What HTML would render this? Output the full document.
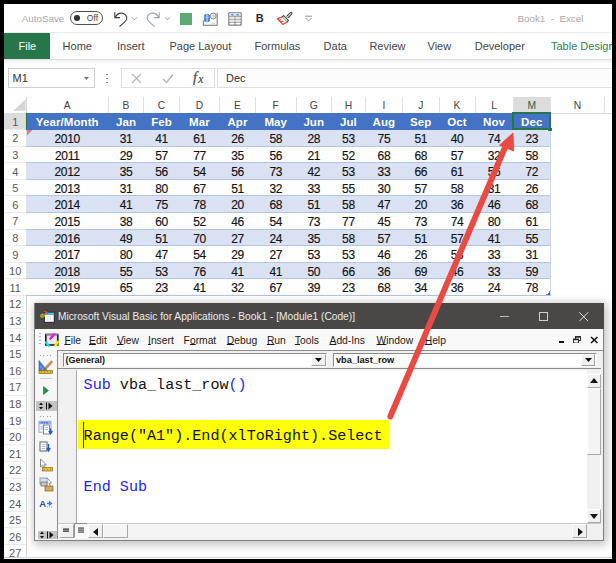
<!DOCTYPE html>
<html><head><meta charset="utf-8"><style>
html,body{margin:0;padding:0;}
body{width:616px;height:563px;background:#000;position:relative;overflow:hidden;font-family:'Liberation Sans', sans-serif;}
#c{position:absolute;left:4px;top:4px;width:608px;height:555px;background:#fff;overflow:hidden;}
#c>div,#c>svg{position:absolute;}
#o{position:absolute;left:-4px;top:-4px;width:616px;height:563px;}
#o>div,#o>svg{position:absolute;}
</style></head><body><div id="c"><div id="o">
<div style="left:21.8px;top:14.00px;font:normal 9.8px/9.8px 'Liberation Sans', sans-serif;color:#a8a8a8;white-space:pre;">AutoSave</div>
<div style="left:70px;top:11.3px;width:30.8px;height:12px;border:1px solid #505050;border-radius:7px"></div>
<div style="left:74px;top:15.2px;width:5.6px;height:5.6px;border-radius:50%;background:#333"></div>
<div style="left:86.8px;top:14.02px;font:normal 8.6px/8.6px 'Liberation Sans', sans-serif;color:#444;white-space:pre;">Off</div>
<svg style="left:100px;top:0px" width="80" height="32" viewBox="100 0 80 32">
<path d="M114.8 12.3 V17.6 H120" fill="none" stroke="#3a3a3a" stroke-width="1.1"/>
<path d="M115.3 17.2 C117 14 120 12.8 122.5 13.2 C125.5 13.8 127.3 16.5 126.6 19.3 C126.2 20.6 125.5 21.3 119.5 26.5" fill="none" stroke="#3a3a3a" stroke-width="1.1"/>
<path d="M132 17.3 L134.5 19.8 L137 17.3" fill="none" stroke="#888" stroke-width="0.8"/>
<path d="M159.2 12.3 V17.6 H154" fill="none" stroke="#9aa2aa" stroke-width="1.1"/>
<path d="M158.7 17.2 C157 14 154 12.8 151.5 13.2 C148.5 13.8 146.7 16.5 147.4 19.3 C147.8 20.6 148.5 21.3 154.5 26.5" fill="none" stroke="#9aa2aa" stroke-width="1.1"/>
<path d="M165 17.3 L167.5 19.8 L170 17.3" fill="none" stroke="#888" stroke-width="0.8"/>
</svg>
<div style="left:179.5px;top:13.4px;width:12.5px;height:11.6px;background:#5daa74"></div>
<svg style="left:202px;top:11px" width="17" height="16" viewBox="0 0 17 16">
<path d="M1.3 9.5 V14.3 H15.2 V1.8" fill="none" stroke="#707070" stroke-width="1"/>
<path d="M9.5 12.8 H13" stroke="#aaa" stroke-width="0.6"/>
<path d="M2 4.2 Q5 1.5 8 4.2 V10 Q5 12.7 2 10 Z" fill="#4a88dc"/>
<path d="M5 3 V11" stroke="#e8f0fc" stroke-width="0.9"/>
<path d="M2.5 6 Q5 7.5 7.5 6" fill="none" stroke="#c8dcf8" stroke-width="0.6"/>
<circle cx="11.2" cy="5" r="3" fill="#fff" stroke="#7a7a7a" stroke-width="0.9"/>
<path d="M11.2 2 V8 M8.4 5 H14" stroke="#a0a0a0" stroke-width="0.5"/>
</svg>
<svg style="left:227.5px;top:12px" width="14" height="14" viewBox="0 0 14 14">
<rect x="0.9" y="0.9" width="12.2" height="12.2" fill="#fff" stroke="#505050" stroke-width="0.9"/>
<rect x="1.4" y="1.4" width="11.2" height="2.8" fill="#dde8f8"/>
<path d="M0.9 4.3 H13.1 M0.9 7.2 H13.1 M0.9 10.1 H13.1" stroke="#606060" stroke-width="0.8"/>
<path d="M7 4.3 V13.1" stroke="#606060" stroke-width="0.8"/>
<path d="M1.4 4.8 H6.6 V6.8 H1.4 Z M7.4 4.8 H12.6 V6.8 H7.4Z M1.4 7.7 H6.6 V9.7 H1.4 Z M7.4 7.7 H12.6 V9.7 H7.4Z" fill="#e6e6e6"/>
<path d="M2.8 2.2 L4.3 3.8 L5.8 2.2 Z M8.2 2.2 L9.7 3.8 L11.2 2.2 Z" fill="#2b6fd6"/>
</svg>
<div style="left:255.8px;top:13.29px;font:bold 11px/11px 'Liberation Sans', sans-serif;color:#2a2a2a;white-space:pre;">B</div>
<svg style="left:270px;top:5px" width="26" height="25" viewBox="270 5 26 25">
<path d="M286.5 16.5 L290.2 12.8 Q291.3 12 291.8 12.8 Q292.3 13.6 291.5 14.4 L287.8 18" fill="#fff" stroke="#4a4a4a" stroke-width="1.1"/>
<path d="M283.6 15.6 L288.5 20.4 L287 21.9 L282.1 17.1 Z" fill="#fff" stroke="#4a4a4a" stroke-width="1.1"/>
<path d="M282.1 17.1 L277.3 18.6 L282.8 24.4 L287 21.9" fill="#fff" stroke="#e8402e" stroke-width="1.2" stroke-linejoin="round"/>
<path d="M278.5 20.3 L281.2 19.7 M280 22 L283.5 21.2" stroke="#e8402e" stroke-width="1.1"/>
</svg>
<svg style="left:304px;top:15px" width="9" height="7" viewBox="0 0 9 7">
<path d="M1 1.2 H8" stroke="#888" stroke-width="0.9"/>
<path d="M1.5 3 L4.5 6 L7.5 3" fill="none" stroke="#888" stroke-width="0.9"/>
</svg>
<div style="left:517.5px;top:13.70px;font:normal 9.8px/9.8px 'Liberation Sans', sans-serif;color:#a8a8a8;white-space:pre;">Book1  -  Excel</div>
<div style="left:4px;top:32px;width:608px;height:1px;background:#ebebeb"></div>
<div style="left:4px;top:33px;width:46px;height:26px;background:#27764b"></div>
<div style="left:18.5px;top:40.69px;font:normal 11px/11px 'Liberation Sans', sans-serif;color:#fff;white-space:pre;">File</div>
<div style="left:62.6px;top:40.69px;font:normal 11px/11px 'Liberation Sans', sans-serif;color:#444;white-space:pre;">Home</div>
<div style="left:117px;top:40.69px;font:normal 11px/11px 'Liberation Sans', sans-serif;color:#444;white-space:pre;">Insert</div>
<div style="left:169.5px;top:40.69px;font:normal 11px/11px 'Liberation Sans', sans-serif;color:#444;white-space:pre;">Page Layout</div>
<div style="left:254.5px;top:40.69px;font:normal 11px/11px 'Liberation Sans', sans-serif;color:#444;white-space:pre;">Formulas</div>
<div style="left:323.6px;top:40.69px;font:normal 11px/11px 'Liberation Sans', sans-serif;color:#444;white-space:pre;">Data</div>
<div style="left:369.4px;top:40.69px;font:normal 11px/11px 'Liberation Sans', sans-serif;color:#444;white-space:pre;">Review</div>
<div style="left:427.5px;top:40.69px;font:normal 11px/11px 'Liberation Sans', sans-serif;color:#444;white-space:pre;">View</div>
<div style="left:474.7px;top:40.69px;font:normal 11px/11px 'Liberation Sans', sans-serif;color:#444;white-space:pre;">Developer</div>
<div style="left:551px;top:40.69px;font:normal 11px/11px 'Liberation Sans', sans-serif;color:#2f7f50;white-space:pre;">Table Design</div>
<div style="left:4px;top:59px;width:608px;height:1px;background:#e2e2e2"></div>
<div style="left:4px;top:60px;width:608px;height:4px;background:linear-gradient(#eeeeee,#ffffff)"></div>
<div style="left:8px;top:68px;width:85px;height:17.6px;border:1px solid #d0d0d0;background:#fff"></div>
<div style="left:12.5px;top:72.99px;font:normal 11px/11px 'Liberation Sans', sans-serif;color:#333;white-space:pre;">M1</div>
<svg style="left:84px;top:76.5px" width="5" height="3" viewBox="0 0 5 3"><path d="M0 0 H5 L2.5 3Z" fill="#707070"/></svg>
<div style="left:106.3px;top:74px;width:1.4000000000000057px;height:1.4000000000000057px;background:#888"></div>
<div style="left:106.3px;top:78px;width:1.4000000000000057px;height:1.4000000000000057px;background:#888"></div>
<div style="left:106.3px;top:82px;width:1.4000000000000057px;height:1.4000000000000057px;background:#888"></div>
<div style="left:120.7px;top:68px;width:92px;height:17.6px;border:1px solid #e0e0e0;background:#fff"></div>
<svg style="left:131px;top:73px" width="11" height="11" viewBox="0 0 11 11"><path d="M1 1 L10 10 M10 1 L1 10" stroke="#b4b4b4" stroke-width="1.1"/></svg>
<svg style="left:161.5px;top:73px" width="12" height="11" viewBox="0 0 12 11"><path d="M1 6 L4.5 9.5 L11 1.5" fill="none" stroke="#b4b4b4" stroke-width="1.3"/></svg>
<div style="left:193px;top:70.03px;font:normal 14.5px/14.5px 'Liberation Serif', serif;color:#4a4a4a;white-space:pre;font-style:italic;-webkit-text-stroke:0.2px #4a4a4a">f<span style="font-size:11.5px;margin-left:1.2px;position:relative;top:0.6px">x</span></div>
<div style="left:216.6px;top:68px;width:400px;height:17.6px;border:1px solid #e0e0e0;background:#fcfcfc"></div>
<div style="left:226px;top:72.99px;font:normal 11px/11px 'Liberation Sans', sans-serif;color:#333;white-space:pre;">Dec</div>
<svg style="left:12.5px;top:99px" width="13" height="12" viewBox="0 0 13 12"><path d="M12.5 0.3 V11.7 H0.5 Z" fill="#d5d5d5"/></svg>
<div style="left:513px;top:97px;width:37.5px;height:15.5px;background:#dcdcdc"></div>
<div style="left:4px;top:112.5px;width:608px;height:1.0px;background:#dadada"></div>
<div style="left:108.0px;top:97px;width:1.0px;height:16px;background:#e0e0e0"></div>
<div style="left:143.0px;top:97px;width:1.0px;height:16px;background:#e0e0e0"></div>
<div style="left:179.0px;top:97px;width:1.0px;height:16px;background:#e0e0e0"></div>
<div style="left:219.0px;top:97px;width:1.0px;height:16px;background:#e0e0e0"></div>
<div style="left:255.0px;top:97px;width:1.0px;height:16px;background:#e0e0e0"></div>
<div style="left:295.5px;top:97px;width:1.0px;height:16px;background:#e0e0e0"></div>
<div style="left:331.0px;top:97px;width:1.0px;height:16px;background:#e0e0e0"></div>
<div style="left:364.8px;top:97px;width:1.0px;height:16px;background:#e0e0e0"></div>
<div style="left:402.0px;top:97px;width:1.0px;height:16px;background:#e0e0e0"></div>
<div style="left:438.5px;top:97px;width:1.0px;height:16px;background:#e0e0e0"></div>
<div style="left:474.5px;top:97px;width:1.0px;height:16px;background:#e0e0e0"></div>
<div style="left:512.5px;top:97px;width:1.0px;height:16px;background:#e0e0e0"></div>
<div style="left:550.0px;top:97px;width:1.0px;height:16px;background:#e0e0e0"></div>
<div style="left:604.0px;top:97px;width:1.0px;height:16px;background:#e0e0e0"></div>
<div style="left:25.5px;top:97px;width:1.0px;height:462px;background:#d4d4d4"></div>
<div style="left:-32.75px;top:101.08px;width:200px;text-align:center;font:normal 10.3px/10.3px 'Liberation Sans', sans-serif;color:#444;white-space:pre;">A</div>
<div style="left:26.0px;top:101.08px;width:200px;text-align:center;font:normal 10.3px/10.3px 'Liberation Sans', sans-serif;color:#444;white-space:pre;">B</div>
<div style="left:61.5px;top:101.08px;width:200px;text-align:center;font:normal 10.3px/10.3px 'Liberation Sans', sans-serif;color:#444;white-space:pre;">C</div>
<div style="left:99.5px;top:101.08px;width:200px;text-align:center;font:normal 10.3px/10.3px 'Liberation Sans', sans-serif;color:#444;white-space:pre;">D</div>
<div style="left:137.5px;top:101.08px;width:200px;text-align:center;font:normal 10.3px/10.3px 'Liberation Sans', sans-serif;color:#444;white-space:pre;">E</div>
<div style="left:175.75px;top:101.08px;width:200px;text-align:center;font:normal 10.3px/10.3px 'Liberation Sans', sans-serif;color:#444;white-space:pre;">F</div>
<div style="left:213.75px;top:101.08px;width:200px;text-align:center;font:normal 10.3px/10.3px 'Liberation Sans', sans-serif;color:#444;white-space:pre;">G</div>
<div style="left:248.39999999999998px;top:101.08px;width:200px;text-align:center;font:normal 10.3px/10.3px 'Liberation Sans', sans-serif;color:#444;white-space:pre;">H</div>
<div style="left:283.9px;top:101.08px;width:200px;text-align:center;font:normal 10.3px/10.3px 'Liberation Sans', sans-serif;color:#444;white-space:pre;">I</div>
<div style="left:320.75px;top:101.08px;width:200px;text-align:center;font:normal 10.3px/10.3px 'Liberation Sans', sans-serif;color:#444;white-space:pre;">J</div>
<div style="left:357.0px;top:101.08px;width:200px;text-align:center;font:normal 10.3px/10.3px 'Liberation Sans', sans-serif;color:#444;white-space:pre;">K</div>
<div style="left:394.0px;top:101.08px;width:200px;text-align:center;font:normal 10.3px/10.3px 'Liberation Sans', sans-serif;color:#444;white-space:pre;">L</div>
<div style="left:431.75px;top:101.08px;width:200px;text-align:center;font:normal 10.3px/10.3px 'Liberation Sans', sans-serif;color:#2a6048;white-space:pre;">M</div>
<div style="left:477.5px;top:101.08px;width:200px;text-align:center;font:normal 10.3px/10.3px 'Liberation Sans', sans-serif;color:#444;white-space:pre;">N</div>
<div style="left:4px;top:113px;width:22px;height:16.5px;background:#dcdcdc"></div>
<div style="left:4px;top:129px;width:22px;height:1px;background:#ececec"></div>
<div style="left:-84.8px;top:116.79px;width:200px;text-align:center;font:normal 11px/11px 'Liberation Sans', sans-serif;color:#585858;white-space:pre;">1</div>
<div style="left:4px;top:146px;width:22px;height:1px;background:#ececec"></div>
<div style="left:-84.8px;top:133.39px;width:200px;text-align:center;font:normal 11px/11px 'Liberation Sans', sans-serif;color:#585858;white-space:pre;">2</div>
<div style="left:4px;top:162px;width:22px;height:1px;background:#ececec"></div>
<div style="left:-84.8px;top:149.99px;width:200px;text-align:center;font:normal 11px/11px 'Liberation Sans', sans-serif;color:#585858;white-space:pre;">3</div>
<div style="left:4px;top:179px;width:22px;height:1px;background:#ececec"></div>
<div style="left:-84.8px;top:166.59px;width:200px;text-align:center;font:normal 11px/11px 'Liberation Sans', sans-serif;color:#585858;white-space:pre;">4</div>
<div style="left:4px;top:195px;width:22px;height:1px;background:#ececec"></div>
<div style="left:-84.8px;top:183.19px;width:200px;text-align:center;font:normal 11px/11px 'Liberation Sans', sans-serif;color:#585858;white-space:pre;">5</div>
<div style="left:4px;top:212px;width:22px;height:1px;background:#ececec"></div>
<div style="left:-84.8px;top:199.79px;width:200px;text-align:center;font:normal 11px/11px 'Liberation Sans', sans-serif;color:#585858;white-space:pre;">6</div>
<div style="left:4px;top:229px;width:22px;height:1px;background:#ececec"></div>
<div style="left:-84.8px;top:216.39px;width:200px;text-align:center;font:normal 11px/11px 'Liberation Sans', sans-serif;color:#585858;white-space:pre;">7</div>
<div style="left:4px;top:245px;width:22px;height:1px;background:#ececec"></div>
<div style="left:-84.8px;top:232.99px;width:200px;text-align:center;font:normal 11px/11px 'Liberation Sans', sans-serif;color:#585858;white-space:pre;">8</div>
<div style="left:4px;top:262px;width:22px;height:1px;background:#ececec"></div>
<div style="left:-84.8px;top:249.59px;width:200px;text-align:center;font:normal 11px/11px 'Liberation Sans', sans-serif;color:#585858;white-space:pre;">9</div>
<div style="left:4px;top:278px;width:22px;height:1px;background:#ececec"></div>
<div style="left:-84.8px;top:266.19px;width:200px;text-align:center;font:normal 11px/11px 'Liberation Sans', sans-serif;color:#585858;white-space:pre;">10</div>
<div style="left:4px;top:295px;width:22px;height:1px;background:#ececec"></div>
<div style="left:-84.8px;top:282.79px;width:200px;text-align:center;font:normal 11px/11px 'Liberation Sans', sans-serif;color:#585858;white-space:pre;">11</div>
<div style="left:4px;top:312px;width:22px;height:1px;background:#ececec"></div>
<div style="left:-84.8px;top:299.39px;width:200px;text-align:center;font:normal 11px/11px 'Liberation Sans', sans-serif;color:#585858;white-space:pre;">12</div>
<div style="left:4px;top:328px;width:22px;height:1px;background:#ececec"></div>
<div style="left:-84.8px;top:315.99px;width:200px;text-align:center;font:normal 11px/11px 'Liberation Sans', sans-serif;color:#585858;white-space:pre;">13</div>
<div style="left:4px;top:345px;width:22px;height:1px;background:#ececec"></div>
<div style="left:-84.8px;top:332.59px;width:200px;text-align:center;font:normal 11px/11px 'Liberation Sans', sans-serif;color:#585858;white-space:pre;">14</div>
<div style="left:4px;top:361px;width:22px;height:1px;background:#ececec"></div>
<div style="left:-84.8px;top:349.19px;width:200px;text-align:center;font:normal 11px/11px 'Liberation Sans', sans-serif;color:#585858;white-space:pre;">15</div>
<div style="left:4px;top:378px;width:22px;height:1px;background:#ececec"></div>
<div style="left:-84.8px;top:365.79px;width:200px;text-align:center;font:normal 11px/11px 'Liberation Sans', sans-serif;color:#585858;white-space:pre;">16</div>
<div style="left:4px;top:395px;width:22px;height:1px;background:#ececec"></div>
<div style="left:-84.8px;top:382.39px;width:200px;text-align:center;font:normal 11px/11px 'Liberation Sans', sans-serif;color:#585858;white-space:pre;">17</div>
<div style="left:4px;top:411px;width:22px;height:1px;background:#ececec"></div>
<div style="left:-84.8px;top:398.99px;width:200px;text-align:center;font:normal 11px/11px 'Liberation Sans', sans-serif;color:#585858;white-space:pre;">18</div>
<div style="left:4px;top:428px;width:22px;height:1px;background:#ececec"></div>
<div style="left:-84.8px;top:415.59px;width:200px;text-align:center;font:normal 11px/11px 'Liberation Sans', sans-serif;color:#585858;white-space:pre;">19</div>
<div style="left:4px;top:444px;width:22px;height:1px;background:#ececec"></div>
<div style="left:-84.8px;top:432.19px;width:200px;text-align:center;font:normal 11px/11px 'Liberation Sans', sans-serif;color:#585858;white-space:pre;">20</div>
<div style="left:4px;top:461px;width:22px;height:1px;background:#ececec"></div>
<div style="left:-84.8px;top:448.79px;width:200px;text-align:center;font:normal 11px/11px 'Liberation Sans', sans-serif;color:#585858;white-space:pre;">21</div>
<div style="left:4px;top:478px;width:22px;height:1px;background:#ececec"></div>
<div style="left:-84.8px;top:465.39px;width:200px;text-align:center;font:normal 11px/11px 'Liberation Sans', sans-serif;color:#585858;white-space:pre;">22</div>
<div style="left:4px;top:494px;width:22px;height:1px;background:#ececec"></div>
<div style="left:-84.8px;top:481.99px;width:200px;text-align:center;font:normal 11px/11px 'Liberation Sans', sans-serif;color:#585858;white-space:pre;">23</div>
<div style="left:4px;top:511px;width:22px;height:1px;background:#ececec"></div>
<div style="left:-84.8px;top:498.59px;width:200px;text-align:center;font:normal 11px/11px 'Liberation Sans', sans-serif;color:#585858;white-space:pre;">24</div>
<div style="left:4px;top:527px;width:22px;height:1px;background:#ececec"></div>
<div style="left:-84.8px;top:515.19px;width:200px;text-align:center;font:normal 11px/11px 'Liberation Sans', sans-serif;color:#585858;white-space:pre;">25</div>
<div style="left:4px;top:544px;width:22px;height:1px;background:#ececec"></div>
<div style="left:-84.8px;top:531.79px;width:200px;text-align:center;font:normal 11px/11px 'Liberation Sans', sans-serif;color:#585858;white-space:pre;">26</div>
<div style="left:4px;top:561px;width:22px;height:1px;background:#ececec"></div>
<div style="left:-84.8px;top:548.39px;width:200px;text-align:center;font:normal 11px/11px 'Liberation Sans', sans-serif;color:#585858;white-space:pre;">27</div>
<div style="left:26px;top:113px;width:524px;height:17px;background:#4472c4"></div>
<div style="left:26px;top:130px;width:524px;height:17px;background:#d9e1f2"></div>
<div style="left:26px;top:146px;width:524px;height:1px;background:#b4c6e7"></div>
<div style="left:26px;top:147px;width:524px;height:16px;background:#ffffff"></div>
<div style="left:26px;top:162px;width:524px;height:1px;background:#b4c6e7"></div>
<div style="left:26px;top:163px;width:524px;height:17px;background:#d9e1f2"></div>
<div style="left:26px;top:179px;width:524px;height:1px;background:#b4c6e7"></div>
<div style="left:26px;top:180px;width:524px;height:16px;background:#ffffff"></div>
<div style="left:26px;top:195px;width:524px;height:1px;background:#b4c6e7"></div>
<div style="left:26px;top:196px;width:524px;height:17px;background:#d9e1f2"></div>
<div style="left:26px;top:212px;width:524px;height:1px;background:#b4c6e7"></div>
<div style="left:26px;top:213px;width:524px;height:17px;background:#ffffff"></div>
<div style="left:26px;top:229px;width:524px;height:1px;background:#b4c6e7"></div>
<div style="left:26px;top:230px;width:524px;height:16px;background:#d9e1f2"></div>
<div style="left:26px;top:245px;width:524px;height:1px;background:#b4c6e7"></div>
<div style="left:26px;top:246px;width:524px;height:17px;background:#ffffff"></div>
<div style="left:26px;top:262px;width:524px;height:1px;background:#b4c6e7"></div>
<div style="left:26px;top:263px;width:524px;height:16px;background:#d9e1f2"></div>
<div style="left:26px;top:278px;width:524px;height:1px;background:#b4c6e7"></div>
<div style="left:26px;top:279px;width:524px;height:17px;background:#ffffff"></div>
<div style="left:26px;top:295px;width:524px;height:1px;background:#b4c6e7"></div>
<div style="left:550px;top:130px;width:1px;height:166px;background:#c9d6ee"></div>
<div style="left:-32.75px;top:117.17px;width:200px;text-align:center;font:bold 11.5px/11.5px 'Liberation Sans', sans-serif;color:#fff;white-space:pre;letter-spacing:0.1px">Year/Month</div>
<div style="left:26.0px;top:117.17px;width:200px;text-align:center;font:bold 11.5px/11.5px 'Liberation Sans', sans-serif;color:#fff;white-space:pre;letter-spacing:0.1px">Jan</div>
<div style="left:61.5px;top:117.17px;width:200px;text-align:center;font:bold 11.5px/11.5px 'Liberation Sans', sans-serif;color:#fff;white-space:pre;letter-spacing:0.1px">Feb</div>
<div style="left:99.5px;top:117.17px;width:200px;text-align:center;font:bold 11.5px/11.5px 'Liberation Sans', sans-serif;color:#fff;white-space:pre;letter-spacing:0.1px">Mar</div>
<div style="left:137.5px;top:117.17px;width:200px;text-align:center;font:bold 11.5px/11.5px 'Liberation Sans', sans-serif;color:#fff;white-space:pre;letter-spacing:0.1px">Apr</div>
<div style="left:175.75px;top:117.17px;width:200px;text-align:center;font:bold 11.5px/11.5px 'Liberation Sans', sans-serif;color:#fff;white-space:pre;letter-spacing:0.1px">May</div>
<div style="left:213.75px;top:117.17px;width:200px;text-align:center;font:bold 11.5px/11.5px 'Liberation Sans', sans-serif;color:#fff;white-space:pre;letter-spacing:0.1px">Jun</div>
<div style="left:248.39999999999998px;top:117.17px;width:200px;text-align:center;font:bold 11.5px/11.5px 'Liberation Sans', sans-serif;color:#fff;white-space:pre;letter-spacing:0.1px">Jul</div>
<div style="left:283.9px;top:117.17px;width:200px;text-align:center;font:bold 11.5px/11.5px 'Liberation Sans', sans-serif;color:#fff;white-space:pre;letter-spacing:0.1px">Aug</div>
<div style="left:320.75px;top:117.17px;width:200px;text-align:center;font:bold 11.5px/11.5px 'Liberation Sans', sans-serif;color:#fff;white-space:pre;letter-spacing:0.1px">Sep</div>
<div style="left:357.0px;top:117.17px;width:200px;text-align:center;font:bold 11.5px/11.5px 'Liberation Sans', sans-serif;color:#fff;white-space:pre;letter-spacing:0.1px">Oct</div>
<div style="left:394.0px;top:117.17px;width:200px;text-align:center;font:bold 11.5px/11.5px 'Liberation Sans', sans-serif;color:#fff;white-space:pre;letter-spacing:0.1px">Nov</div>
<div style="left:431.75px;top:117.17px;width:200px;text-align:center;font:bold 11.5px/11.5px 'Liberation Sans', sans-serif;color:#fff;white-space:pre;letter-spacing:0.1px">Dec</div>
<div style="left:-32.75px;top:132.94px;width:200px;text-align:center;font:normal 12px/12px 'Liberation Sans', sans-serif;color:#111;white-space:pre;letter-spacing:-0.3px;-webkit-text-stroke:0.15px #111">2010</div>
<div style="left:26.0px;top:132.94px;width:200px;text-align:center;font:normal 12px/12px 'Liberation Sans', sans-serif;color:#111;white-space:pre;letter-spacing:-0.3px;-webkit-text-stroke:0.15px #111">31</div>
<div style="left:61.5px;top:132.94px;width:200px;text-align:center;font:normal 12px/12px 'Liberation Sans', sans-serif;color:#111;white-space:pre;letter-spacing:-0.3px;-webkit-text-stroke:0.15px #111">41</div>
<div style="left:99.5px;top:132.94px;width:200px;text-align:center;font:normal 12px/12px 'Liberation Sans', sans-serif;color:#111;white-space:pre;letter-spacing:-0.3px;-webkit-text-stroke:0.15px #111">61</div>
<div style="left:137.5px;top:132.94px;width:200px;text-align:center;font:normal 12px/12px 'Liberation Sans', sans-serif;color:#111;white-space:pre;letter-spacing:-0.3px;-webkit-text-stroke:0.15px #111">26</div>
<div style="left:175.75px;top:132.94px;width:200px;text-align:center;font:normal 12px/12px 'Liberation Sans', sans-serif;color:#111;white-space:pre;letter-spacing:-0.3px;-webkit-text-stroke:0.15px #111">58</div>
<div style="left:213.75px;top:132.94px;width:200px;text-align:center;font:normal 12px/12px 'Liberation Sans', sans-serif;color:#111;white-space:pre;letter-spacing:-0.3px;-webkit-text-stroke:0.15px #111">28</div>
<div style="left:248.39999999999998px;top:132.94px;width:200px;text-align:center;font:normal 12px/12px 'Liberation Sans', sans-serif;color:#111;white-space:pre;letter-spacing:-0.3px;-webkit-text-stroke:0.15px #111">53</div>
<div style="left:283.9px;top:132.94px;width:200px;text-align:center;font:normal 12px/12px 'Liberation Sans', sans-serif;color:#111;white-space:pre;letter-spacing:-0.3px;-webkit-text-stroke:0.15px #111">75</div>
<div style="left:320.75px;top:132.94px;width:200px;text-align:center;font:normal 12px/12px 'Liberation Sans', sans-serif;color:#111;white-space:pre;letter-spacing:-0.3px;-webkit-text-stroke:0.15px #111">51</div>
<div style="left:357.0px;top:132.94px;width:200px;text-align:center;font:normal 12px/12px 'Liberation Sans', sans-serif;color:#111;white-space:pre;letter-spacing:-0.3px;-webkit-text-stroke:0.15px #111">40</div>
<div style="left:394.0px;top:132.94px;width:200px;text-align:center;font:normal 12px/12px 'Liberation Sans', sans-serif;color:#111;white-space:pre;letter-spacing:-0.3px;-webkit-text-stroke:0.15px #111">74</div>
<div style="left:431.75px;top:132.94px;width:200px;text-align:center;font:normal 12px/12px 'Liberation Sans', sans-serif;color:#111;white-space:pre;letter-spacing:-0.3px;-webkit-text-stroke:0.15px #111">23</div>
<div style="left:-32.75px;top:149.54px;width:200px;text-align:center;font:normal 12px/12px 'Liberation Sans', sans-serif;color:#111;white-space:pre;letter-spacing:-0.3px;-webkit-text-stroke:0.15px #111">2011</div>
<div style="left:26.0px;top:149.54px;width:200px;text-align:center;font:normal 12px/12px 'Liberation Sans', sans-serif;color:#111;white-space:pre;letter-spacing:-0.3px;-webkit-text-stroke:0.15px #111">29</div>
<div style="left:61.5px;top:149.54px;width:200px;text-align:center;font:normal 12px/12px 'Liberation Sans', sans-serif;color:#111;white-space:pre;letter-spacing:-0.3px;-webkit-text-stroke:0.15px #111">57</div>
<div style="left:99.5px;top:149.54px;width:200px;text-align:center;font:normal 12px/12px 'Liberation Sans', sans-serif;color:#111;white-space:pre;letter-spacing:-0.3px;-webkit-text-stroke:0.15px #111">77</div>
<div style="left:137.5px;top:149.54px;width:200px;text-align:center;font:normal 12px/12px 'Liberation Sans', sans-serif;color:#111;white-space:pre;letter-spacing:-0.3px;-webkit-text-stroke:0.15px #111">35</div>
<div style="left:175.75px;top:149.54px;width:200px;text-align:center;font:normal 12px/12px 'Liberation Sans', sans-serif;color:#111;white-space:pre;letter-spacing:-0.3px;-webkit-text-stroke:0.15px #111">56</div>
<div style="left:213.75px;top:149.54px;width:200px;text-align:center;font:normal 12px/12px 'Liberation Sans', sans-serif;color:#111;white-space:pre;letter-spacing:-0.3px;-webkit-text-stroke:0.15px #111">21</div>
<div style="left:248.39999999999998px;top:149.54px;width:200px;text-align:center;font:normal 12px/12px 'Liberation Sans', sans-serif;color:#111;white-space:pre;letter-spacing:-0.3px;-webkit-text-stroke:0.15px #111">52</div>
<div style="left:283.9px;top:149.54px;width:200px;text-align:center;font:normal 12px/12px 'Liberation Sans', sans-serif;color:#111;white-space:pre;letter-spacing:-0.3px;-webkit-text-stroke:0.15px #111">68</div>
<div style="left:320.75px;top:149.54px;width:200px;text-align:center;font:normal 12px/12px 'Liberation Sans', sans-serif;color:#111;white-space:pre;letter-spacing:-0.3px;-webkit-text-stroke:0.15px #111">68</div>
<div style="left:357.0px;top:149.54px;width:200px;text-align:center;font:normal 12px/12px 'Liberation Sans', sans-serif;color:#111;white-space:pre;letter-spacing:-0.3px;-webkit-text-stroke:0.15px #111">57</div>
<div style="left:394.0px;top:149.54px;width:200px;text-align:center;font:normal 12px/12px 'Liberation Sans', sans-serif;color:#111;white-space:pre;letter-spacing:-0.3px;-webkit-text-stroke:0.15px #111">32</div>
<div style="left:431.75px;top:149.54px;width:200px;text-align:center;font:normal 12px/12px 'Liberation Sans', sans-serif;color:#111;white-space:pre;letter-spacing:-0.3px;-webkit-text-stroke:0.15px #111">58</div>
<div style="left:-32.75px;top:166.14px;width:200px;text-align:center;font:normal 12px/12px 'Liberation Sans', sans-serif;color:#111;white-space:pre;letter-spacing:-0.3px;-webkit-text-stroke:0.15px #111">2012</div>
<div style="left:26.0px;top:166.14px;width:200px;text-align:center;font:normal 12px/12px 'Liberation Sans', sans-serif;color:#111;white-space:pre;letter-spacing:-0.3px;-webkit-text-stroke:0.15px #111">35</div>
<div style="left:61.5px;top:166.14px;width:200px;text-align:center;font:normal 12px/12px 'Liberation Sans', sans-serif;color:#111;white-space:pre;letter-spacing:-0.3px;-webkit-text-stroke:0.15px #111">56</div>
<div style="left:99.5px;top:166.14px;width:200px;text-align:center;font:normal 12px/12px 'Liberation Sans', sans-serif;color:#111;white-space:pre;letter-spacing:-0.3px;-webkit-text-stroke:0.15px #111">54</div>
<div style="left:137.5px;top:166.14px;width:200px;text-align:center;font:normal 12px/12px 'Liberation Sans', sans-serif;color:#111;white-space:pre;letter-spacing:-0.3px;-webkit-text-stroke:0.15px #111">56</div>
<div style="left:175.75px;top:166.14px;width:200px;text-align:center;font:normal 12px/12px 'Liberation Sans', sans-serif;color:#111;white-space:pre;letter-spacing:-0.3px;-webkit-text-stroke:0.15px #111">73</div>
<div style="left:213.75px;top:166.14px;width:200px;text-align:center;font:normal 12px/12px 'Liberation Sans', sans-serif;color:#111;white-space:pre;letter-spacing:-0.3px;-webkit-text-stroke:0.15px #111">42</div>
<div style="left:248.39999999999998px;top:166.14px;width:200px;text-align:center;font:normal 12px/12px 'Liberation Sans', sans-serif;color:#111;white-space:pre;letter-spacing:-0.3px;-webkit-text-stroke:0.15px #111">53</div>
<div style="left:283.9px;top:166.14px;width:200px;text-align:center;font:normal 12px/12px 'Liberation Sans', sans-serif;color:#111;white-space:pre;letter-spacing:-0.3px;-webkit-text-stroke:0.15px #111">33</div>
<div style="left:320.75px;top:166.14px;width:200px;text-align:center;font:normal 12px/12px 'Liberation Sans', sans-serif;color:#111;white-space:pre;letter-spacing:-0.3px;-webkit-text-stroke:0.15px #111">66</div>
<div style="left:357.0px;top:166.14px;width:200px;text-align:center;font:normal 12px/12px 'Liberation Sans', sans-serif;color:#111;white-space:pre;letter-spacing:-0.3px;-webkit-text-stroke:0.15px #111">61</div>
<div style="left:394.0px;top:166.14px;width:200px;text-align:center;font:normal 12px/12px 'Liberation Sans', sans-serif;color:#111;white-space:pre;letter-spacing:-0.3px;-webkit-text-stroke:0.15px #111">56</div>
<div style="left:431.75px;top:166.14px;width:200px;text-align:center;font:normal 12px/12px 'Liberation Sans', sans-serif;color:#111;white-space:pre;letter-spacing:-0.3px;-webkit-text-stroke:0.15px #111">72</div>
<div style="left:-32.75px;top:182.74px;width:200px;text-align:center;font:normal 12px/12px 'Liberation Sans', sans-serif;color:#111;white-space:pre;letter-spacing:-0.3px;-webkit-text-stroke:0.15px #111">2013</div>
<div style="left:26.0px;top:182.74px;width:200px;text-align:center;font:normal 12px/12px 'Liberation Sans', sans-serif;color:#111;white-space:pre;letter-spacing:-0.3px;-webkit-text-stroke:0.15px #111">31</div>
<div style="left:61.5px;top:182.74px;width:200px;text-align:center;font:normal 12px/12px 'Liberation Sans', sans-serif;color:#111;white-space:pre;letter-spacing:-0.3px;-webkit-text-stroke:0.15px #111">80</div>
<div style="left:99.5px;top:182.74px;width:200px;text-align:center;font:normal 12px/12px 'Liberation Sans', sans-serif;color:#111;white-space:pre;letter-spacing:-0.3px;-webkit-text-stroke:0.15px #111">67</div>
<div style="left:137.5px;top:182.74px;width:200px;text-align:center;font:normal 12px/12px 'Liberation Sans', sans-serif;color:#111;white-space:pre;letter-spacing:-0.3px;-webkit-text-stroke:0.15px #111">51</div>
<div style="left:175.75px;top:182.74px;width:200px;text-align:center;font:normal 12px/12px 'Liberation Sans', sans-serif;color:#111;white-space:pre;letter-spacing:-0.3px;-webkit-text-stroke:0.15px #111">32</div>
<div style="left:213.75px;top:182.74px;width:200px;text-align:center;font:normal 12px/12px 'Liberation Sans', sans-serif;color:#111;white-space:pre;letter-spacing:-0.3px;-webkit-text-stroke:0.15px #111">33</div>
<div style="left:248.39999999999998px;top:182.74px;width:200px;text-align:center;font:normal 12px/12px 'Liberation Sans', sans-serif;color:#111;white-space:pre;letter-spacing:-0.3px;-webkit-text-stroke:0.15px #111">55</div>
<div style="left:283.9px;top:182.74px;width:200px;text-align:center;font:normal 12px/12px 'Liberation Sans', sans-serif;color:#111;white-space:pre;letter-spacing:-0.3px;-webkit-text-stroke:0.15px #111">30</div>
<div style="left:320.75px;top:182.74px;width:200px;text-align:center;font:normal 12px/12px 'Liberation Sans', sans-serif;color:#111;white-space:pre;letter-spacing:-0.3px;-webkit-text-stroke:0.15px #111">57</div>
<div style="left:357.0px;top:182.74px;width:200px;text-align:center;font:normal 12px/12px 'Liberation Sans', sans-serif;color:#111;white-space:pre;letter-spacing:-0.3px;-webkit-text-stroke:0.15px #111">58</div>
<div style="left:394.0px;top:182.74px;width:200px;text-align:center;font:normal 12px/12px 'Liberation Sans', sans-serif;color:#111;white-space:pre;letter-spacing:-0.3px;-webkit-text-stroke:0.15px #111">31</div>
<div style="left:431.75px;top:182.74px;width:200px;text-align:center;font:normal 12px/12px 'Liberation Sans', sans-serif;color:#111;white-space:pre;letter-spacing:-0.3px;-webkit-text-stroke:0.15px #111">26</div>
<div style="left:-32.75px;top:199.34px;width:200px;text-align:center;font:normal 12px/12px 'Liberation Sans', sans-serif;color:#111;white-space:pre;letter-spacing:-0.3px;-webkit-text-stroke:0.15px #111">2014</div>
<div style="left:26.0px;top:199.34px;width:200px;text-align:center;font:normal 12px/12px 'Liberation Sans', sans-serif;color:#111;white-space:pre;letter-spacing:-0.3px;-webkit-text-stroke:0.15px #111">41</div>
<div style="left:61.5px;top:199.34px;width:200px;text-align:center;font:normal 12px/12px 'Liberation Sans', sans-serif;color:#111;white-space:pre;letter-spacing:-0.3px;-webkit-text-stroke:0.15px #111">75</div>
<div style="left:99.5px;top:199.34px;width:200px;text-align:center;font:normal 12px/12px 'Liberation Sans', sans-serif;color:#111;white-space:pre;letter-spacing:-0.3px;-webkit-text-stroke:0.15px #111">78</div>
<div style="left:137.5px;top:199.34px;width:200px;text-align:center;font:normal 12px/12px 'Liberation Sans', sans-serif;color:#111;white-space:pre;letter-spacing:-0.3px;-webkit-text-stroke:0.15px #111">20</div>
<div style="left:175.75px;top:199.34px;width:200px;text-align:center;font:normal 12px/12px 'Liberation Sans', sans-serif;color:#111;white-space:pre;letter-spacing:-0.3px;-webkit-text-stroke:0.15px #111">68</div>
<div style="left:213.75px;top:199.34px;width:200px;text-align:center;font:normal 12px/12px 'Liberation Sans', sans-serif;color:#111;white-space:pre;letter-spacing:-0.3px;-webkit-text-stroke:0.15px #111">51</div>
<div style="left:248.39999999999998px;top:199.34px;width:200px;text-align:center;font:normal 12px/12px 'Liberation Sans', sans-serif;color:#111;white-space:pre;letter-spacing:-0.3px;-webkit-text-stroke:0.15px #111">58</div>
<div style="left:283.9px;top:199.34px;width:200px;text-align:center;font:normal 12px/12px 'Liberation Sans', sans-serif;color:#111;white-space:pre;letter-spacing:-0.3px;-webkit-text-stroke:0.15px #111">47</div>
<div style="left:320.75px;top:199.34px;width:200px;text-align:center;font:normal 12px/12px 'Liberation Sans', sans-serif;color:#111;white-space:pre;letter-spacing:-0.3px;-webkit-text-stroke:0.15px #111">20</div>
<div style="left:357.0px;top:199.34px;width:200px;text-align:center;font:normal 12px/12px 'Liberation Sans', sans-serif;color:#111;white-space:pre;letter-spacing:-0.3px;-webkit-text-stroke:0.15px #111">36</div>
<div style="left:394.0px;top:199.34px;width:200px;text-align:center;font:normal 12px/12px 'Liberation Sans', sans-serif;color:#111;white-space:pre;letter-spacing:-0.3px;-webkit-text-stroke:0.15px #111">46</div>
<div style="left:431.75px;top:199.34px;width:200px;text-align:center;font:normal 12px/12px 'Liberation Sans', sans-serif;color:#111;white-space:pre;letter-spacing:-0.3px;-webkit-text-stroke:0.15px #111">68</div>
<div style="left:-32.75px;top:215.94px;width:200px;text-align:center;font:normal 12px/12px 'Liberation Sans', sans-serif;color:#111;white-space:pre;letter-spacing:-0.3px;-webkit-text-stroke:0.15px #111">2015</div>
<div style="left:26.0px;top:215.94px;width:200px;text-align:center;font:normal 12px/12px 'Liberation Sans', sans-serif;color:#111;white-space:pre;letter-spacing:-0.3px;-webkit-text-stroke:0.15px #111">38</div>
<div style="left:61.5px;top:215.94px;width:200px;text-align:center;font:normal 12px/12px 'Liberation Sans', sans-serif;color:#111;white-space:pre;letter-spacing:-0.3px;-webkit-text-stroke:0.15px #111">60</div>
<div style="left:99.5px;top:215.94px;width:200px;text-align:center;font:normal 12px/12px 'Liberation Sans', sans-serif;color:#111;white-space:pre;letter-spacing:-0.3px;-webkit-text-stroke:0.15px #111">52</div>
<div style="left:137.5px;top:215.94px;width:200px;text-align:center;font:normal 12px/12px 'Liberation Sans', sans-serif;color:#111;white-space:pre;letter-spacing:-0.3px;-webkit-text-stroke:0.15px #111">46</div>
<div style="left:175.75px;top:215.94px;width:200px;text-align:center;font:normal 12px/12px 'Liberation Sans', sans-serif;color:#111;white-space:pre;letter-spacing:-0.3px;-webkit-text-stroke:0.15px #111">54</div>
<div style="left:213.75px;top:215.94px;width:200px;text-align:center;font:normal 12px/12px 'Liberation Sans', sans-serif;color:#111;white-space:pre;letter-spacing:-0.3px;-webkit-text-stroke:0.15px #111">73</div>
<div style="left:248.39999999999998px;top:215.94px;width:200px;text-align:center;font:normal 12px/12px 'Liberation Sans', sans-serif;color:#111;white-space:pre;letter-spacing:-0.3px;-webkit-text-stroke:0.15px #111">77</div>
<div style="left:283.9px;top:215.94px;width:200px;text-align:center;font:normal 12px/12px 'Liberation Sans', sans-serif;color:#111;white-space:pre;letter-spacing:-0.3px;-webkit-text-stroke:0.15px #111">45</div>
<div style="left:320.75px;top:215.94px;width:200px;text-align:center;font:normal 12px/12px 'Liberation Sans', sans-serif;color:#111;white-space:pre;letter-spacing:-0.3px;-webkit-text-stroke:0.15px #111">73</div>
<div style="left:357.0px;top:215.94px;width:200px;text-align:center;font:normal 12px/12px 'Liberation Sans', sans-serif;color:#111;white-space:pre;letter-spacing:-0.3px;-webkit-text-stroke:0.15px #111">74</div>
<div style="left:394.0px;top:215.94px;width:200px;text-align:center;font:normal 12px/12px 'Liberation Sans', sans-serif;color:#111;white-space:pre;letter-spacing:-0.3px;-webkit-text-stroke:0.15px #111">80</div>
<div style="left:431.75px;top:215.94px;width:200px;text-align:center;font:normal 12px/12px 'Liberation Sans', sans-serif;color:#111;white-space:pre;letter-spacing:-0.3px;-webkit-text-stroke:0.15px #111">61</div>
<div style="left:-32.75px;top:232.54px;width:200px;text-align:center;font:normal 12px/12px 'Liberation Sans', sans-serif;color:#111;white-space:pre;letter-spacing:-0.3px;-webkit-text-stroke:0.15px #111">2016</div>
<div style="left:26.0px;top:232.54px;width:200px;text-align:center;font:normal 12px/12px 'Liberation Sans', sans-serif;color:#111;white-space:pre;letter-spacing:-0.3px;-webkit-text-stroke:0.15px #111">49</div>
<div style="left:61.5px;top:232.54px;width:200px;text-align:center;font:normal 12px/12px 'Liberation Sans', sans-serif;color:#111;white-space:pre;letter-spacing:-0.3px;-webkit-text-stroke:0.15px #111">51</div>
<div style="left:99.5px;top:232.54px;width:200px;text-align:center;font:normal 12px/12px 'Liberation Sans', sans-serif;color:#111;white-space:pre;letter-spacing:-0.3px;-webkit-text-stroke:0.15px #111">70</div>
<div style="left:137.5px;top:232.54px;width:200px;text-align:center;font:normal 12px/12px 'Liberation Sans', sans-serif;color:#111;white-space:pre;letter-spacing:-0.3px;-webkit-text-stroke:0.15px #111">27</div>
<div style="left:175.75px;top:232.54px;width:200px;text-align:center;font:normal 12px/12px 'Liberation Sans', sans-serif;color:#111;white-space:pre;letter-spacing:-0.3px;-webkit-text-stroke:0.15px #111">24</div>
<div style="left:213.75px;top:232.54px;width:200px;text-align:center;font:normal 12px/12px 'Liberation Sans', sans-serif;color:#111;white-space:pre;letter-spacing:-0.3px;-webkit-text-stroke:0.15px #111">35</div>
<div style="left:248.39999999999998px;top:232.54px;width:200px;text-align:center;font:normal 12px/12px 'Liberation Sans', sans-serif;color:#111;white-space:pre;letter-spacing:-0.3px;-webkit-text-stroke:0.15px #111">58</div>
<div style="left:283.9px;top:232.54px;width:200px;text-align:center;font:normal 12px/12px 'Liberation Sans', sans-serif;color:#111;white-space:pre;letter-spacing:-0.3px;-webkit-text-stroke:0.15px #111">57</div>
<div style="left:320.75px;top:232.54px;width:200px;text-align:center;font:normal 12px/12px 'Liberation Sans', sans-serif;color:#111;white-space:pre;letter-spacing:-0.3px;-webkit-text-stroke:0.15px #111">51</div>
<div style="left:357.0px;top:232.54px;width:200px;text-align:center;font:normal 12px/12px 'Liberation Sans', sans-serif;color:#111;white-space:pre;letter-spacing:-0.3px;-webkit-text-stroke:0.15px #111">57</div>
<div style="left:394.0px;top:232.54px;width:200px;text-align:center;font:normal 12px/12px 'Liberation Sans', sans-serif;color:#111;white-space:pre;letter-spacing:-0.3px;-webkit-text-stroke:0.15px #111">41</div>
<div style="left:431.75px;top:232.54px;width:200px;text-align:center;font:normal 12px/12px 'Liberation Sans', sans-serif;color:#111;white-space:pre;letter-spacing:-0.3px;-webkit-text-stroke:0.15px #111">55</div>
<div style="left:-32.75px;top:249.14px;width:200px;text-align:center;font:normal 12px/12px 'Liberation Sans', sans-serif;color:#111;white-space:pre;letter-spacing:-0.3px;-webkit-text-stroke:0.15px #111">2017</div>
<div style="left:26.0px;top:249.14px;width:200px;text-align:center;font:normal 12px/12px 'Liberation Sans', sans-serif;color:#111;white-space:pre;letter-spacing:-0.3px;-webkit-text-stroke:0.15px #111">80</div>
<div style="left:61.5px;top:249.14px;width:200px;text-align:center;font:normal 12px/12px 'Liberation Sans', sans-serif;color:#111;white-space:pre;letter-spacing:-0.3px;-webkit-text-stroke:0.15px #111">47</div>
<div style="left:99.5px;top:249.14px;width:200px;text-align:center;font:normal 12px/12px 'Liberation Sans', sans-serif;color:#111;white-space:pre;letter-spacing:-0.3px;-webkit-text-stroke:0.15px #111">54</div>
<div style="left:137.5px;top:249.14px;width:200px;text-align:center;font:normal 12px/12px 'Liberation Sans', sans-serif;color:#111;white-space:pre;letter-spacing:-0.3px;-webkit-text-stroke:0.15px #111">29</div>
<div style="left:175.75px;top:249.14px;width:200px;text-align:center;font:normal 12px/12px 'Liberation Sans', sans-serif;color:#111;white-space:pre;letter-spacing:-0.3px;-webkit-text-stroke:0.15px #111">27</div>
<div style="left:213.75px;top:249.14px;width:200px;text-align:center;font:normal 12px/12px 'Liberation Sans', sans-serif;color:#111;white-space:pre;letter-spacing:-0.3px;-webkit-text-stroke:0.15px #111">53</div>
<div style="left:248.39999999999998px;top:249.14px;width:200px;text-align:center;font:normal 12px/12px 'Liberation Sans', sans-serif;color:#111;white-space:pre;letter-spacing:-0.3px;-webkit-text-stroke:0.15px #111">53</div>
<div style="left:283.9px;top:249.14px;width:200px;text-align:center;font:normal 12px/12px 'Liberation Sans', sans-serif;color:#111;white-space:pre;letter-spacing:-0.3px;-webkit-text-stroke:0.15px #111">46</div>
<div style="left:320.75px;top:249.14px;width:200px;text-align:center;font:normal 12px/12px 'Liberation Sans', sans-serif;color:#111;white-space:pre;letter-spacing:-0.3px;-webkit-text-stroke:0.15px #111">26</div>
<div style="left:357.0px;top:249.14px;width:200px;text-align:center;font:normal 12px/12px 'Liberation Sans', sans-serif;color:#111;white-space:pre;letter-spacing:-0.3px;-webkit-text-stroke:0.15px #111">53</div>
<div style="left:394.0px;top:249.14px;width:200px;text-align:center;font:normal 12px/12px 'Liberation Sans', sans-serif;color:#111;white-space:pre;letter-spacing:-0.3px;-webkit-text-stroke:0.15px #111">33</div>
<div style="left:431.75px;top:249.14px;width:200px;text-align:center;font:normal 12px/12px 'Liberation Sans', sans-serif;color:#111;white-space:pre;letter-spacing:-0.3px;-webkit-text-stroke:0.15px #111">31</div>
<div style="left:-32.75px;top:265.74px;width:200px;text-align:center;font:normal 12px/12px 'Liberation Sans', sans-serif;color:#111;white-space:pre;letter-spacing:-0.3px;-webkit-text-stroke:0.15px #111">2018</div>
<div style="left:26.0px;top:265.74px;width:200px;text-align:center;font:normal 12px/12px 'Liberation Sans', sans-serif;color:#111;white-space:pre;letter-spacing:-0.3px;-webkit-text-stroke:0.15px #111">55</div>
<div style="left:61.5px;top:265.74px;width:200px;text-align:center;font:normal 12px/12px 'Liberation Sans', sans-serif;color:#111;white-space:pre;letter-spacing:-0.3px;-webkit-text-stroke:0.15px #111">53</div>
<div style="left:99.5px;top:265.74px;width:200px;text-align:center;font:normal 12px/12px 'Liberation Sans', sans-serif;color:#111;white-space:pre;letter-spacing:-0.3px;-webkit-text-stroke:0.15px #111">76</div>
<div style="left:137.5px;top:265.74px;width:200px;text-align:center;font:normal 12px/12px 'Liberation Sans', sans-serif;color:#111;white-space:pre;letter-spacing:-0.3px;-webkit-text-stroke:0.15px #111">41</div>
<div style="left:175.75px;top:265.74px;width:200px;text-align:center;font:normal 12px/12px 'Liberation Sans', sans-serif;color:#111;white-space:pre;letter-spacing:-0.3px;-webkit-text-stroke:0.15px #111">41</div>
<div style="left:213.75px;top:265.74px;width:200px;text-align:center;font:normal 12px/12px 'Liberation Sans', sans-serif;color:#111;white-space:pre;letter-spacing:-0.3px;-webkit-text-stroke:0.15px #111">50</div>
<div style="left:248.39999999999998px;top:265.74px;width:200px;text-align:center;font:normal 12px/12px 'Liberation Sans', sans-serif;color:#111;white-space:pre;letter-spacing:-0.3px;-webkit-text-stroke:0.15px #111">66</div>
<div style="left:283.9px;top:265.74px;width:200px;text-align:center;font:normal 12px/12px 'Liberation Sans', sans-serif;color:#111;white-space:pre;letter-spacing:-0.3px;-webkit-text-stroke:0.15px #111">36</div>
<div style="left:320.75px;top:265.74px;width:200px;text-align:center;font:normal 12px/12px 'Liberation Sans', sans-serif;color:#111;white-space:pre;letter-spacing:-0.3px;-webkit-text-stroke:0.15px #111">69</div>
<div style="left:357.0px;top:265.74px;width:200px;text-align:center;font:normal 12px/12px 'Liberation Sans', sans-serif;color:#111;white-space:pre;letter-spacing:-0.3px;-webkit-text-stroke:0.15px #111">46</div>
<div style="left:394.0px;top:265.74px;width:200px;text-align:center;font:normal 12px/12px 'Liberation Sans', sans-serif;color:#111;white-space:pre;letter-spacing:-0.3px;-webkit-text-stroke:0.15px #111">33</div>
<div style="left:431.75px;top:265.74px;width:200px;text-align:center;font:normal 12px/12px 'Liberation Sans', sans-serif;color:#111;white-space:pre;letter-spacing:-0.3px;-webkit-text-stroke:0.15px #111">59</div>
<div style="left:-32.75px;top:282.34px;width:200px;text-align:center;font:normal 12px/12px 'Liberation Sans', sans-serif;color:#111;white-space:pre;letter-spacing:-0.3px;-webkit-text-stroke:0.15px #111">2019</div>
<div style="left:26.0px;top:282.34px;width:200px;text-align:center;font:normal 12px/12px 'Liberation Sans', sans-serif;color:#111;white-space:pre;letter-spacing:-0.3px;-webkit-text-stroke:0.15px #111">65</div>
<div style="left:61.5px;top:282.34px;width:200px;text-align:center;font:normal 12px/12px 'Liberation Sans', sans-serif;color:#111;white-space:pre;letter-spacing:-0.3px;-webkit-text-stroke:0.15px #111">23</div>
<div style="left:99.5px;top:282.34px;width:200px;text-align:center;font:normal 12px/12px 'Liberation Sans', sans-serif;color:#111;white-space:pre;letter-spacing:-0.3px;-webkit-text-stroke:0.15px #111">41</div>
<div style="left:137.5px;top:282.34px;width:200px;text-align:center;font:normal 12px/12px 'Liberation Sans', sans-serif;color:#111;white-space:pre;letter-spacing:-0.3px;-webkit-text-stroke:0.15px #111">32</div>
<div style="left:175.75px;top:282.34px;width:200px;text-align:center;font:normal 12px/12px 'Liberation Sans', sans-serif;color:#111;white-space:pre;letter-spacing:-0.3px;-webkit-text-stroke:0.15px #111">67</div>
<div style="left:213.75px;top:282.34px;width:200px;text-align:center;font:normal 12px/12px 'Liberation Sans', sans-serif;color:#111;white-space:pre;letter-spacing:-0.3px;-webkit-text-stroke:0.15px #111">39</div>
<div style="left:248.39999999999998px;top:282.34px;width:200px;text-align:center;font:normal 12px/12px 'Liberation Sans', sans-serif;color:#111;white-space:pre;letter-spacing:-0.3px;-webkit-text-stroke:0.15px #111">23</div>
<div style="left:283.9px;top:282.34px;width:200px;text-align:center;font:normal 12px/12px 'Liberation Sans', sans-serif;color:#111;white-space:pre;letter-spacing:-0.3px;-webkit-text-stroke:0.15px #111">68</div>
<div style="left:320.75px;top:282.34px;width:200px;text-align:center;font:normal 12px/12px 'Liberation Sans', sans-serif;color:#111;white-space:pre;letter-spacing:-0.3px;-webkit-text-stroke:0.15px #111">34</div>
<div style="left:357.0px;top:282.34px;width:200px;text-align:center;font:normal 12px/12px 'Liberation Sans', sans-serif;color:#111;white-space:pre;letter-spacing:-0.3px;-webkit-text-stroke:0.15px #111">36</div>
<div style="left:394.0px;top:282.34px;width:200px;text-align:center;font:normal 12px/12px 'Liberation Sans', sans-serif;color:#111;white-space:pre;letter-spacing:-0.3px;-webkit-text-stroke:0.15px #111">24</div>
<div style="left:431.75px;top:282.34px;width:200px;text-align:center;font:normal 12px/12px 'Liberation Sans', sans-serif;color:#111;white-space:pre;letter-spacing:-0.3px;-webkit-text-stroke:0.15px #111">78</div>
<svg style="left:27px;top:130px" width="6" height="6" viewBox="0 0 6 6"><path d="M0 0 H5.5 L0 5.5Z" fill="#ea7a6a"/></svg>
<div style="left:26px;top:113px;width:1.1999999999999993px;height:16.5px;background:#27764b"></div>
<div style="left:512px;top:112px;width:35px;height:13.8px;border:2px solid #27764b"></div>
<div style="left:548.3px;top:127.5px;width:3.7000000000000455px;height:3.3000000000000114px;background:#27764b"></div>
<div style="left:548px;top:293px;width:2px;height:2px;background:#3a62b0"></div>
<div style="left:546px;top:294px;width:2px;height:1px;background:#6a8ad0"></div>
<div style="left:549px;top:291px;width:1px;height:2px;background:#6a8ad0"></div>
<div style="left:34.5px;top:303px;width:569.5px;height:237.5px;box-shadow:1px 2px 9px 2px rgba(0,0,0,0.24)"></div>
<div style="left:34px;top:303px;width:570px;height:237.5px;background:#f0f0f0;border:1px solid #808080;box-sizing:border-box"></div>
<div style="left:34.5px;top:303px;width:569.5px;height:25.5px;background:#4a4846"></div>
<svg style="left:38px;top:306px" width="22" height="20" viewBox="0 0 22 20">
<rect x="6.3" y="6.3" width="10" height="10" fill="#fff" stroke="#201c30" stroke-width="1"/>
<rect x="6.8" y="6.8" width="9" height="1.6" fill="#10e8f0"/>
<path d="M6.8 8.6 H15.8" stroke="#3040b0" stroke-width="0.5"/>
<path d="M9.5 10 V15.5 M12.5 10 V15.5" stroke="#e8e8e8" stroke-width="0.8"/>
<ellipse cx="4.7" cy="9.6" rx="2.6" ry="1.9" fill="#b8b010" transform="rotate(-20 4.7 9.6)"/>
<path d="M7 5.5 L9.5 7" stroke="#e84030" stroke-width="1.8" stroke-linecap="round"/>
<path d="M7 4.5 Q8 2.8 9.5 4" stroke="#5a3010" stroke-width="1.2" fill="none"/>
<path d="M4 10.5 L7.5 7" stroke="#3050a0" stroke-width="0.8"/>
</svg>
<div style="left:57.9px;top:311.67px;font:normal 10.2px/10.2px 'Liberation Sans', sans-serif;color:#ececec;white-space:pre;">Microsoft Visual Basic for Applications - Book1 - [Module1 (Code)]</div>
<div style="left:500px;top:315.5px;width:8.5px;height:1.0px;background:#bdbdbd"></div>
<div style="left:539.2px;top:311.7px;width:7.3px;height:7.6px;border:1px solid #cfcfcf"></div>
<svg style="left:579px;top:311.5px" width="9.5" height="9.5" viewBox="0 0 9.5 9.5"><path d="M0.3 0.3 L9.2 9.2 M9.2 0.3 L0.3 9.2" stroke="#e4e4e4" stroke-width="1"/></svg>
<div style="left:35px;top:328.5px;width:568px;height:22.0px;background:#f9f9f9"></div>
<div style="left:39.3px;top:332.5px;width:1.6000000000000014px;height:1.3999999999999773px;background:#a8b0b8"></div>
<div style="left:39.3px;top:336px;width:1.6000000000000014px;height:1.3999999999999773px;background:#a8b0b8"></div>
<div style="left:39.3px;top:339.5px;width:1.6000000000000014px;height:1.3999999999999773px;background:#a8b0b8"></div>
<div style="left:39.3px;top:343px;width:1.6000000000000014px;height:1.3999999999999773px;background:#a8b0b8"></div>
<svg style="left:44px;top:332px" width="16" height="16" viewBox="0 0 16 16">
<rect x="1.8" y="2.5" width="12" height="10.5" fill="#d8d8d8" stroke="#111" stroke-width="1.5"/>
<path d="M1.8 2.5 H13.8" stroke="#888" stroke-width="1.5"/>
<path d="M3.5 4.5 H12.2 V11.5 H3.5Z" fill="#e8e8e8"/>
<path d="M6.5 6.5 L10 2.5" stroke="#f018f0" stroke-width="2.6" stroke-linecap="round"/>
<path d="M2 10.5 L4.8 13.8" stroke="#18e0f0" stroke-width="2.4" stroke-linecap="round"/>
<path d="M11.5 13.5 L13.5 10" stroke="#f0f010" stroke-width="2.6" stroke-linecap="round"/>
</svg>
<div style="left:64.4px;top:336.18px;font:normal 10.3px/10.3px 'Liberation Sans', sans-serif;color:#1a1a1a;white-space:pre;text-decoration-thickness:1px;text-underline-offset:-0.4px"><u>F</u>ile</div>
<div style="left:89px;top:336.18px;font:normal 10.3px/10.3px 'Liberation Sans', sans-serif;color:#1a1a1a;white-space:pre;text-decoration-thickness:1px;text-underline-offset:-0.4px"><u>E</u>dit</div>
<div style="left:116.9px;top:336.18px;font:normal 10.3px/10.3px 'Liberation Sans', sans-serif;color:#1a1a1a;white-space:pre;text-decoration-thickness:1px;text-underline-offset:-0.4px"><u>V</u>iew</div>
<div style="left:148px;top:336.18px;font:normal 10.3px/10.3px 'Liberation Sans', sans-serif;color:#1a1a1a;white-space:pre;text-decoration-thickness:1px;text-underline-offset:-0.4px"><u>I</u>nsert</div>
<div style="left:183.6px;top:336.18px;font:normal 10.3px/10.3px 'Liberation Sans', sans-serif;color:#1a1a1a;white-space:pre;text-decoration-thickness:1px;text-underline-offset:-0.4px">F<u>o</u>rmat</div>
<div style="left:226.8px;top:336.18px;font:normal 10.3px/10.3px 'Liberation Sans', sans-serif;color:#1a1a1a;white-space:pre;text-decoration-thickness:1px;text-underline-offset:-0.4px"><u>D</u>ebug</div>
<div style="left:266.9px;top:336.18px;font:normal 10.3px/10.3px 'Liberation Sans', sans-serif;color:#1a1a1a;white-space:pre;text-decoration-thickness:1px;text-underline-offset:-0.4px"><u>R</u>un</div>
<div style="left:294.8px;top:336.18px;font:normal 10.3px/10.3px 'Liberation Sans', sans-serif;color:#1a1a1a;white-space:pre;text-decoration-thickness:1px;text-underline-offset:-0.4px"><u>T</u>ools</div>
<div style="left:329.5px;top:336.18px;font:normal 10.3px/10.3px 'Liberation Sans', sans-serif;color:#1a1a1a;white-space:pre;text-decoration-thickness:1px;text-underline-offset:-0.4px"><u>A</u>dd-Ins</div>
<div style="left:376.6px;top:336.18px;font:normal 10.3px/10.3px 'Liberation Sans', sans-serif;color:#1a1a1a;white-space:pre;text-decoration-thickness:1px;text-underline-offset:-0.4px"><u>W</u>indow</div>
<div style="left:424.7px;top:336.18px;font:normal 10.3px/10.3px 'Liberation Sans', sans-serif;color:#1a1a1a;white-space:pre;text-decoration-thickness:1px;text-underline-offset:-0.4px"><u>H</u>elp</div>
<div style="left:558.5px;top:341px;width:5.5px;height:1.8000000000000114px;background:#111"></div>
<svg style="left:573px;top:335.5px" width="8" height="7.5" viewBox="0 0 8 7.5"><rect x="2.5" y="0.5" width="5" height="4" fill="none" stroke="#222" stroke-width="0.9"/><rect x="2.5" y="0.5" width="5" height="1.2" fill="#222"/><rect x="0.5" y="3" width="5" height="4" fill="#f9f9f9" stroke="#222" stroke-width="0.9"/><rect x="0.5" y="3" width="5" height="1.2" fill="#222"/></svg>
<svg style="left:590px;top:336px" width="8.5" height="8" viewBox="0 0 8.5 8"><path d="M1 1 L7.5 7 M7.5 1 L1 7" stroke="#111" stroke-width="1.6"/></svg>
<div style="left:35px;top:350.5px;width:21.799999999999997px;height:189.0px;background:#f6f6f6"></div>
<div style="left:39.5px;top:355.2px;width:1.2000000000000028px;height:1.1999999999999886px;background:#a0a0a0"></div>
<div style="left:43px;top:355.2px;width:1.2000000000000028px;height:1.1999999999999886px;background:#a0a0a0"></div>
<div style="left:46.5px;top:355.2px;width:1.2000000000000028px;height:1.1999999999999886px;background:#a0a0a0"></div>
<div style="left:50px;top:355.2px;width:1.2000000000000028px;height:1.1999999999999886px;background:#a0a0a0"></div>
<svg style="left:38px;top:359px" width="16" height="16" viewBox="0 0 16 16">
<path d="M1 1.5 L1 12 L9.5 12 Z" fill="#4a7ed8" stroke="#2850a0" stroke-width="0.6"/>
<circle cx="3" cy="8" r="0.6" fill="#c8d8f8"/><circle cx="4.5" cy="10" r="0.6" fill="#c8d8f8"/>
<path d="M7 10 L13.5 3" stroke="#c09060" stroke-width="2.6" stroke-linecap="round"/>
<path d="M6.5 10.5 L7.5 9.5" stroke="#404040" stroke-width="1.2"/>
<rect x="1" y="11.5" width="13.5" height="3" fill="#d8c020" stroke="#7a5a10" stroke-width="0.6"/>
<path d="M3 13 H4 M6 13 H7 M9 13 H10 M12 13 H13" stroke="#e04040" stroke-width="0.8"/>
</svg>
<div style="left:40px;top:377.5px;width:12px;height:1.0px;background:#cfcfcf"></div>
<svg style="left:42.5px;top:385.5px" width="6" height="9" viewBox="0 0 6 9"><path d="M0.5 0.5 L5.5 4.5 L0.5 8.5Z" fill="#209a40" stroke="#106020" stroke-width="0.5"/></svg>
<div style="left:36px;top:400.5px;width:20.5px;height:10.0px;background:#c2c4c6"></div>
<svg style="left:38px;top:401.5px" width="18" height="8" viewBox="0 0 18 8"><path d="M1 3 L3 0.5 L5 3Z M1 5 L3 7.5 L5 5Z" fill="#111"/><rect x="8" y="0.5" width="1" height="7" fill="#111"/><path d="M10.5 0.5 L14.5 4 L10.5 7.5Z" fill="#111"/></svg>
<div style="left:39.5px;top:416px;width:1.2000000000000028px;height:1.1999999999999886px;background:#a8a8a8"></div>
<div style="left:43px;top:416px;width:1.2000000000000028px;height:1.1999999999999886px;background:#a8a8a8"></div>
<div style="left:46.5px;top:416px;width:1.2000000000000028px;height:1.1999999999999886px;background:#a8a8a8"></div>
<div style="left:50px;top:416px;width:1.2000000000000028px;height:1.1999999999999886px;background:#a8a8a8"></div>
<svg style="left:38px;top:420px" width="16" height="15" viewBox="0 0 16 15">
<rect x="1" y="1.2" width="12" height="11" fill="#f4f8fc" stroke="#8a9ab8" stroke-width="0.8"/>
<rect x="1" y="1.2" width="12" height="3" fill="#8ab4ec"/>
<circle cx="4" cy="2.7" r="0.8" fill="#4050d8"/><circle cx="6.5" cy="2.7" r="0.8" fill="#4050d8"/><circle cx="9" cy="2.7" r="0.8" fill="#4050d8"/>
<path d="M2.5 7 H5 M2.5 9 H5" stroke="#7a9ad8" stroke-width="0.7"/>
<rect x="5.5" y="5" width="6" height="9" fill="#fff" stroke="#6a6a6a" stroke-width="0.8"/>
<path d="M6.8 7.5 H10 M6.8 9.5 H10" stroke="#7a9ad8" stroke-width="0.7"/>
<path d="M12.5 8.5 V13 M10.8 11 L12.5 13.8 L14.3 11" fill="#3a6ad8" stroke="#2a5ac8" stroke-width="1.4"/>
</svg>
<svg style="left:39px;top:441px" width="13" height="11" viewBox="0 0 13 11">
<rect x="1" y="1" width="7" height="9" fill="#fff" stroke="#505050" stroke-width="0.9"/>
<path d="M2.5 3.5 H6.5 M2.5 5.5 H6.5 M2.5 7.5 H6" stroke="#8aa0d0" stroke-width="0.7"/>
<path d="M9.5 3 V9 M7.8 7 L9.5 10 L11.2 7" fill="#3a6ad8" stroke="#2a5ac8" stroke-width="1.4"/>
</svg>
<svg style="left:39px;top:457.5px" width="15" height="14" viewBox="0 0 15 14">
<path d="M1.5 1 L1.5 9 L3.5 7.3 L5.3 10.5 L6.5 10 L4.8 6.8 L7.3 6.8 Z" fill="#fff" stroke="#707070" stroke-width="0.8"/>
<rect x="3.5" y="9.5" width="10" height="3.5" fill="#e0c830" stroke="#8a6a20" stroke-width="0.7"/>
<path d="M5 11.3 H6 M8 11.3 H9 M11 11.3 H12" stroke="#e04040" stroke-width="0.8"/>
</svg>
<svg style="left:38.5px;top:477px" width="15" height="15" viewBox="0 0 15 15">
<rect x="1" y="1" width="7" height="6" fill="#d8e4f4" stroke="#7a8aa0" stroke-width="0.8"/>
<rect x="2" y="5" width="6" height="4" fill="#c8c8c8" stroke="#606060" stroke-width="0.7"/>
<path d="M8 1 L12.5 6 L10 6.5 L11.5 9" fill="#fff" stroke="#707070" stroke-width="0.8"/>
<rect x="6" y="9" width="8" height="5" fill="#d8a860" stroke="#8a6020" stroke-width="0.7"/>
</svg>
<div style="left:39.3px;top:499.16px;font:bold 9.5px/9.5px 'Liberation Sans', sans-serif;color:#2a4a98;white-space:pre;">A</div>
<svg style="left:45.5px;top:500px" width="7" height="8" viewBox="0 0 7 8"><path d="M1 3.5 H4 M3 1.5 L5.5 3.5 L3 5.5" fill="none" stroke="#3a7ad8" stroke-width="1.3"/><path d="M1 7 H1.8 M3 7 H3.8 M5 7 H5.8" stroke="#506080" stroke-width="0.8"/></svg>
<div style="left:37.5px;top:530.6px;width:19.0px;height:8.399999999999977px;background:#c2c4c6"></div>
<svg style="left:39px;top:531px" width="18" height="8" viewBox="0 0 18 8"><path d="M1 3 L3 0.5 L5 3Z M1 5 L3 7.5 L5 5Z" fill="#111"/><rect x="8" y="0.5" width="1" height="7" fill="#111"/><path d="M10.5 0.5 L14.5 4 L10.5 7.5Z" fill="#111"/></svg>
<div style="left:56.6px;top:350.2px;width:1.3999999999999986px;height:189.3px;background:#8c8c8c"></div>
<div style="left:56.6px;top:350.2px;width:546.4px;height:1.0px;background:#8c8c8c"></div>
<div style="left:58px;top:351.2px;width:545px;height:17.30000000000001px;background:#f0f0f0"></div>
<div style="left:63px;top:353px;width:262px;height:12px;border:1.5px solid;border-color:#8a8a8a #fafafa #fafafa #8a8a8a;background:#fff;box-sizing:content-box"></div>
<div style="left:311.3px;top:354px;width:14.5px;height:12px;background:#f0f0f0;border:1px solid;border-color:#fff #a0a0a0 #a0a0a0 #fff;box-sizing:border-box"></div>
<svg style="left:315px;top:358.3px" width="7" height="4" viewBox="0 0 7 4"><path d="M0 0 H7 L3.5 4Z" fill="#111"/></svg>
<div style="left:65.4px;top:355.88px;font:bold 9px/9px 'Liberation Sans', sans-serif;color:#111;white-space:pre;">(General)</div>
<div style="left:333px;top:353px;width:262px;height:12px;border:1.5px solid;border-color:#8a8a8a #fafafa #fafafa #8a8a8a;background:#fff;box-sizing:content-box"></div>
<div style="left:580.7px;top:354px;width:14.6px;height:12px;background:#f0f0f0;border:1px solid;border-color:#fff #a0a0a0 #a0a0a0 #fff;box-sizing:border-box"></div>
<svg style="left:584.5px;top:358.3px" width="7" height="4" viewBox="0 0 7 4"><path d="M0 0 H7 L3.5 4Z" fill="#111"/></svg>
<div style="left:336px;top:355.71px;font:bold 9.2px/9.2px 'Liberation Sans', sans-serif;color:#111;white-space:pre;">vba_last_row</div>
<div style="left:58px;top:368.4px;width:543px;height:1.1000000000000227px;background:#8c8c8c"></div>
<div style="left:58px;top:369.5px;width:543px;height:169.0px;background:#fff"></div>
<div style="left:58px;top:369.5px;width:18px;height:154.0px;background:#f0f0f0"></div>
<div style="left:76px;top:369.5px;width:1px;height:154.0px;background:#a8a8a8"></div>
<div style="left:586.6px;top:369.5px;width:13.899999999999977px;height:154.0px;background:#f0f0f0"></div>
<div style="left:586.6px;top:373.7px;width:13px;height:13.6px;background:#f0f0f0;border:1px solid #a8a8a8;border-left-color:#fff;border-top-color:#fff;box-sizing:border-box;width:14px;height:14.6px"></div>
<svg style="left:589.5px;top:378px" width="8" height="5" viewBox="0 0 8 5"><path d="M0 5 H8 L4 0Z" fill="#111"/></svg>
<div style="left:586.6px;top:388.3px;width:14px;height:67px;background:#f4f4f4;border:1px solid #a8a8a8;border-left-color:#fff;border-top-color:#fff;box-sizing:border-box"></div>
<div style="left:586.6px;top:509px;width:14px;height:14px;background:#f0f0f0;border:1px solid #a8a8a8;border-left-color:#fff;border-top-color:#fff;box-sizing:border-box"></div>
<svg style="left:589.5px;top:514px" width="8" height="5" viewBox="0 0 8 5"><path d="M0 0 H8 L4 5Z" fill="#111"/></svg>
<div style="left:58px;top:523.5px;width:542.5px;height:15.0px;background:#f4f4f4"></div>
<div style="left:58px;top:523px;width:542.5px;height:1px;background:#c8c8c8"></div>
<div style="left:58.8px;top:524px;width:15px;height:14px;background:#f0f0f0;border:1px solid #a8a8a8;border-left-color:#fff;border-top-color:#fff;box-sizing:border-box"></div>
<svg style="left:62px;top:528px" width="8" height="5" viewBox="0 0 8 5"><rect x="1" y="0.5" width="6" height="1.3" fill="#333"/><rect x="1" y="2.5" width="6" height="1.3" fill="#333"/></svg>
<div style="left:73.8px;top:523px;width:14.2px;height:15px;background:#f8f8f8;border:1px solid #909090;border-right-color:#fff;border-bottom-color:#fff;box-sizing:border-box"></div>
<svg style="left:77px;top:527px" width="8" height="7" viewBox="0 0 8 7"><rect x="1" y="0.5" width="6" height="1.1" fill="#333"/><rect x="1" y="2.5" width="6" height="1.1" fill="#333"/><rect x="1" y="4.5" width="6" height="1.1" fill="#333"/></svg>
<div style="left:88px;top:524px;width:14.5px;height:14.3px;background:#f0f0f0;border:1px solid #a8a8a8;border-left-color:#fff;border-top-color:#fff;box-sizing:border-box"></div>
<svg style="left:92.5px;top:527.5px" width="5" height="8" viewBox="0 0 5 8"><path d="M5 0 V8 L0 4Z" fill="#111"/></svg>
<div style="left:102.5px;top:524px;width:25.5px;height:14.3px;background:#f4f4f4;border:1px solid #a8a8a8;border-left-color:#fff;border-top-color:#fff;box-sizing:border-box"></div>
<div style="left:572.3px;top:524px;width:14.3px;height:14.3px;background:#f0f0f0;border:1px solid #a8a8a8;border-left-color:#fff;border-top-color:#fff;box-sizing:border-box"></div>
<svg style="left:577.5px;top:527.5px" width="5" height="8" viewBox="0 0 5 8"><path d="M0 0 V8 L5 4Z" fill="#111"/></svg>
<div style="left:586.6px;top:523.5px;width:13.899999999999977px;height:15.0px;background:#f0f0f0"></div>
<div style="left:78px;top:420px;width:311px;height:28.80000000000001px;background:#ffff0a"></div>
<div style="left:82.6px;top:422.2px;width:1.2000000000000028px;height:25.80000000000001px;background:#3a2a10"></div>
<div style="left:83.6px;top:377.53px;font:normal 15.1px/15.1px 'Liberation Mono', monospace;color:#111;white-space:pre;"><span style="color:#2424ff">Sub</span> vba_last_row<span style="color:#2424ff">()</span></div>
<div style="left:83.6px;top:428.93px;font:normal 15.1px/15.1px 'Liberation Mono', monospace;color:#111;white-space:pre;">Range("A1").End(xlToRight).Select</div>
<div style="left:83.6px;top:480.33px;font:normal 15.1px/15.1px 'Liberation Mono', monospace;color:#2424ff;white-space:pre;">End Sub</div>
<div style="left:4px;top:557px;width:608px;height:1px;background:#d4d4d4"></div>
<svg style="left:0;top:0" width="616" height="563" viewBox="0 0 616 563">
<path d="M390.3 416.5 L506.5 144" stroke="#e94a42" stroke-width="5.9" stroke-linecap="round"/>
<path d="M513 133 L499.5 145.2 L513.8 151 Z" fill="#e94a42" stroke="#e94a42" stroke-width="0.8" stroke-linejoin="round"/>
</svg>
</div></div></body></html>
